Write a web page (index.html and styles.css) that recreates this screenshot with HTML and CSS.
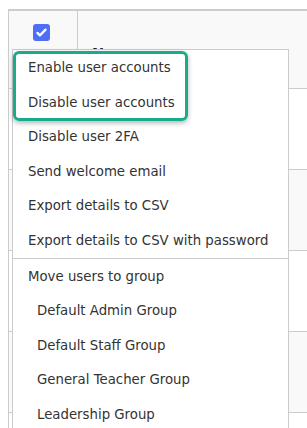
FILE: index.html
```html
<!DOCTYPE html>
<html lang="en">
<head>
  <meta charset="UTF-8">
  <meta name="viewport" content="width=device-width, initial-scale=1.0">
  <title>Users</title>
  <link rel="stylesheet" href="styles.css">
</head>
<body>
  <div class="wrap">
    <table class="users">
      <thead>
        <tr>
          <th class="col-check">
            <span class="checkbox">
              <svg viewBox="0 0 16 16" width="13" height="13"><path d="M3 8.5l3 3 7-7" fill="none" stroke="#fff" stroke-width="2.8" stroke-linecap="round" stroke-linejoin="round"/></svg>
            </span>
          </th>
          <th class="col-name">Name</th>
        </tr>
      </thead>
      <tbody>
        <tr><td></td><td></td></tr>
        <tr class="alt"><td></td><td></td></tr>
        <tr><td></td><td></td></tr>
        <tr class="alt"><td></td><td></td></tr>
        <tr><td></td><td></td></tr>
      </tbody>
    </table>

    <div class="menu">
      <div class="mark"></div>
      <div class="item">Enable user accounts</div>
      <div class="item">Disable user accounts</div>
      <div class="item">Disable user 2FA</div>
      <div class="item">Send welcome email</div>
      <div class="item">Export details to CSV</div>
      <div class="item">Export details to CSV with password</div>
      <div class="sep"></div>
      <div class="item">Move users to group</div>
      <div class="item sub">Default Admin Group</div>
      <div class="item sub">Default Staff Group</div>
      <div class="item sub">General Teacher Group</div>
      <div class="item sub">Leadership Group</div>
    </div>
  </div>
</body>
</html>
```

FILE: styles.css
```css
html, body {
  overflow: hidden;
}
body {
  margin: 0;
  padding: 9px 0 0 8px;
  font-family: "DejaVu Sans", Verdana, sans-serif;
  background: #fff;
}
.wrap {
  position: relative;
  height: 419px;
  overflow: hidden;
}
.users {
  width: 299px;
  border-collapse: collapse;
  border-top: 2px solid #ccc;
  border-left: 1px solid #ccc;
}
.users th, .users td {
  border-bottom: 1px solid #ccc;
  padding: 0;
}
.users thead tr {
  height: 78px;
  background: #f9f9f9;
}
.users tbody tr {
  height: 81px;
}
.users tr.alt {
  background: #f9f9f9;
}
.col-check {
  width: 64px;
  border-right: 1px solid #ccc;
  vertical-align: top;
  padding: 13px 4px 0 0 !important;
}
.col-name {
  text-align: left;
  padding-left: 14px !important;
  padding-top: 8px !important;
  font-size: 14.5px;
  color: #222;
}
.checkbox {
  display: inline-flex;
  align-items: center;
  justify-content: center;
  width: 17px;
  height: 17px;
  border-radius: 3px;
  background: #4d6ef5;
}
.menu {
  position: absolute;
  left: 4px;
  top: 40px;
  width: 275px;
  background: #fff;
  border: 1px solid #ccc;
  font-size: 13.3px;
  color: #333;
}
.item {
  padding: 8px 15px 7px;
  line-height: 19.6px;
  white-space: nowrap;
}
.item.sub {
  padding-left: 24px;
}
.sep {
  border-top: 1px solid #ccc;
}
.mark {
  position: absolute;
  left: 0;
  top: 1px;
  width: 175px;
  height: 70px;
  box-sizing: border-box;
  border: 3px solid #1aab8a;
  border-radius: 6px;
  box-shadow: 0 2px 5px rgba(0, 0, 0, 0.3);
}
```
